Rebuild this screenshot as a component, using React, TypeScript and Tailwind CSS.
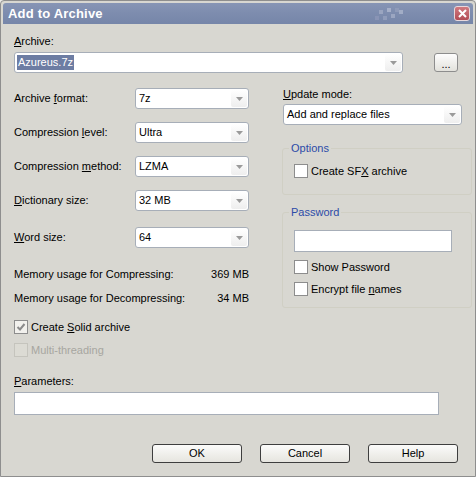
import React from "react";

const font = { fontFamily: '"Liberation Sans", Arial, sans-serif' };

function U({ children }: { children: React.ReactNode }) {
  return <span className="underline underline-offset-1">{children}</span>;
}

function Combo({ value, w, selected }: { value: string; w: string; selected?: boolean }) {
  return (
    <div className={`${w} h-[21px] flex items-stretch bg-white border border-[#a7aeb8] rounded-[3px]`}>
      <div className="flex-1 flex items-center pl-[2px] text-[11px] text-black">
        {selected ? (
          <span className="bg-[#6d7da3] text-white px-[1px] leading-[15px]">{value}</span>
        ) : (
          <span className="pl-[1px]">{value}</span>
        )}
      </div>
      <div className="w-[16px] m-[1px] rounded-[2px] bg-gradient-to-b from-[#ffffff] to-[#eeeeee] flex items-center justify-center">
        <svg width="7" height="4" viewBox="0 0 7 4">
          <path d="M0 0 H7 L3.5 4 Z" fill="#9a9a9a" />
        </svg>
      </div>
    </div>
  );
}

function Check({ label, checked, disabled }: { label: React.ReactNode; checked?: boolean; disabled?: boolean }) {
  return (
    <div className={`flex items-center gap-[3px] h-[14px] leading-[14px] text-[11px] ${disabled ? "text-[#a7a6a0]" : "text-black"}`}>
      <div
        className={`w-[14px] h-[14px] border ${disabled ? "border-[#c5c4bd]" : "border-[#8d8d8d]"} ${
          disabled ? "bg-[#dcdbd4]" : checked ? "bg-[#f2f1ed]" : "bg-white"
        } flex items-center justify-center`}
      >
        {checked && (
          <svg width="10" height="10" viewBox="0 0 10 10">
            <path d="M1.5 5 L4 7.5 L8.5 2" stroke="#8b8b8b" strokeWidth="2" fill="none" />
          </svg>
        )}
      </div>
      <span>{label}</span>
    </div>
  );
}

function Button({ children }: { children: React.ReactNode }) {
  return (
    <div className="w-[90px] h-[19px] border border-[#3e3e3e] rounded-[3px] bg-gradient-to-b from-[#fbfbfa] to-[#e6e5df] flex items-center justify-center text-[11px] text-black">
      {children}
    </div>
  );
}

function Row({ label, value }: { label: React.ReactNode; value: string }) {
  return (
    <div className="flex items-center justify-between h-[21px]">
      <span className="text-[11px]">{label}</span>
      <Combo value={value} w="w-[114px]" />
    </div>
  );
}

export default function App() {
  return (
    <div style={font} className="w-[476px] h-[477px] bg-[#efeeea] text-black">
      <div className="w-[476px] h-[477px] border border-[#8e8e8e] bg-[#d8d7d1] flex flex-col rounded-t-[4px] overflow-hidden">
        {/* title bar */}
        <div className="mx-[2px] mt-[2px] h-[21px] bg-gradient-to-b from-[#8795b5] via-[#7d8cae] to-[#7686a9] flex items-center justify-between pl-[5px] pr-[3px] rounded-t-[3px]">
          <span className="text-white font-bold text-[13px] tracking-[0.2px]">Add to Archive</span>
          <div className="flex items-center gap-[45px]">
            <svg width="36" height="16" viewBox="0 0 36 16">
              <rect x="6" y="4" width="4" height="4" fill="#9aa5c0" />
              <rect x="14" y="2" width="4" height="4" fill="#a6b0c9" />
              <rect x="18" y="8" width="4" height="4" fill="#9ba6c1" />
              <rect x="26" y="4" width="4" height="4" fill="#a2adc6" />
              <rect x="10" y="10" width="4" height="4" fill="#909cba" />
              <rect x="22" y="2" width="4" height="4" fill="#8f9bb9" />
              <rect x="2" y="10" width="4" height="4" fill="#8994b5" />
            </svg>
            <div className="w-[16px] h-[15px] rounded-[3px] border border-[#e8d8dc] bg-gradient-to-b from-[#d07a80] to-[#b24c55] flex items-center justify-center">
              <svg width="9" height="9" viewBox="0 0 9 9">
                <path d="M1 1 L8 8 M8 1 L1 8" stroke="white" strokeWidth="2" />
              </svg>
            </div>
          </div>
        </div>

        {/* body */}
        <div className="flex-1 pl-[13px] pr-[3px] flex flex-col text-[11px]">
          <div className="mt-[10px] h-[14px] leading-[14px]">
            <U>A</U>rchive:
          </div>
          <div className="mt-[4px] flex items-center justify-between">
            <Combo value="Azureus.7z" w="w-[389px]" selected />
            <div className="mr-[14px] w-[24px] h-[19px] border border-[#8d8d8d] rounded-[3px] bg-gradient-to-b from-[#fdfdfd] to-[#e3e2dc] flex items-end justify-center text-[11px] leading-[13px]">
              ...
            </div>
          </div>

          <div className="mt-[14px] flex justify-between">
            {/* left column */}
            <div className="w-[235px] flex flex-col">
              <div className="mt-[1px] flex flex-col gap-[13px]">
                <Row label={<>Archive <U>f</U>ormat:</>} value="7z" />
                <Row label={<>Compression <U>l</U>evel:</>} value="Ultra" />
                <Row label={<>Compression <U>m</U>ethod:</>} value="LZMA" />
                <Row label={<><U>D</U>ictionary size:</>} value="32 MB" />
              </div>
              <div className="mt-[16px]">
                <Row label={<><U>W</U>ord size:</>} value="64" />
              </div>
              <div className="mt-[19px] flex justify-between h-[14px] leading-[14px]">
                <span>Memory usage for Compressing:</span>
                <span>369 MB</span>
              </div>
              <div className="mt-[10px] flex justify-between h-[14px] leading-[14px]">
                <span>Memory usage for Decompressing:</span>
                <span>34 MB</span>
              </div>
              <div className="mt-[15px]">
                <Check checked label={<>Create <U>S</U>olid archive</>} />
              </div>
              <div className="mt-[9px]">
                <Check disabled label="Multi-threading" />
              </div>
            </div>

            {/* right column */}
            <div className="w-[190px] flex flex-col">
              <div className="ml-[1px] h-[14px] leading-[14px]">
                <U>U</U>pdate mode:
              </div>
              <div className="mt-[3px] ml-[1px]">
                <Combo value="Add and replace files" w="w-[179px]" />
              </div>
              <div className="mt-[23px] relative border border-[#d0cfc4] rounded-[3px] h-[47px] w-[190px]">
                <span className="absolute -top-[8px] left-[6px] px-[2px] bg-[#d8d7d1] text-[#2c4ba8] leading-[14px]">
                  Options
                </span>
                <div className="mt-[15px] ml-[11px]">
                  <Check label={<>Create SF<U>X</U> archive</>} />
                </div>
              </div>
              <div className="mt-[17px] relative border border-[#d0cfc4] rounded-[3px] h-[96px] w-[190px]">
                <span className="absolute -top-[8px] left-[6px] px-[2px] bg-[#d8d7d1] text-[#2c4ba8] leading-[14px]">
                  Password
                </span>
                <div className="mt-[17px] ml-[11px] w-[158px] h-[22px] bg-white border border-[#a7aeb8]" />
                <div className="mt-[8px] ml-[11px]">
                  <Check label="Show Password" />
                </div>
                <div className="mt-[8px] ml-[11px]">
                  <Check label={<>Encrypt file <U>n</U>ames</>} />
                </div>
              </div>
            </div>
          </div>

          <div className="mt-[17px] h-[14px] leading-[14px]">
            <U>P</U>arameters:
          </div>
          <div className="mt-[4px] w-[425px] h-[23px] bg-white border border-[#a7aeb8]" />

          <div className="mt-[29px] flex justify-end gap-[18px] mr-[14px]">
            <Button>OK</Button>
            <Button>Cancel</Button>
            <Button>Help</Button>
          </div>
        </div>
      </div>
    </div>
  );
}
